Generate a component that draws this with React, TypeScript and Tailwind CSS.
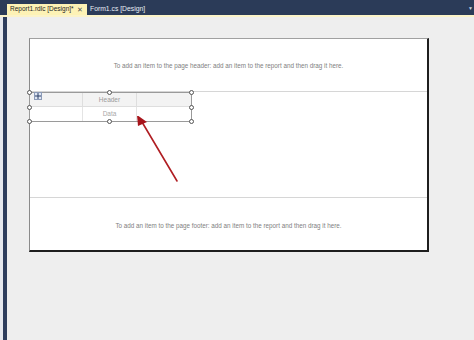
import React from 'react';

const Handle: React.FC<{ className: string }> = ({ className }) => (
  <span
    className={`absolute w-[5px] h-[5px] rounded-full border border-[#555] bg-white ${className}`}
  />
);

const App: React.FC = () => {
  return (
    <div className="w-[474px] h-[340px] flex flex-col bg-[#eeeeee] overflow-hidden font-['Liberation_Sans',sans-serif]">
      {/* Document tab strip */}
      <div className="h-[15px] flex items-end bg-[#2b3b58] shrink-0">
        <div className="w-[7px]" />
        <div className="h-[11px] w-[80px] flex items-center justify-between px-[3px] bg-[#fdf2b5] text-[#1e1e1e] text-[6.5px] leading-none">
          <span>Report1.rdlc [Design]*</span>
          <span className="text-[#555] text-[7px] pr-[1px]">✕</span>
        </div>
        <div className="h-[11px] flex items-center px-[3px] text-[#e8ecf4] text-[6.8px] leading-none">
          Form1.cs [Design]
        </div>
        <div className="flex-1" />
        <span className="text-[#c9d1e0] text-[5px] mr-[1px] mb-[3px]">▼</span>
      </div>
      <div className="h-[2px] bg-[#fbf3c9] shrink-0" />

      {/* Body */}
      <div className="flex-1 flex">
        <div className="w-[3px] bg-[#e6e8ee]" />
        <div className="w-[4px] bg-[#2e3d5c]" />
        <div className="flex-1 pl-[22px] pt-[21px] bg-[#eeeeee]">
          {/* Report page */}
          <div className="w-[400px] h-[214px] flex flex-col bg-white border-t border-l border-t-[#a0a0a0] border-l-[#8a8a8a] border-r-2 border-b-2 border-r-[#1e1e1e] border-b-[#1e1e1e]">
            <div className="h-[53px] flex items-center justify-center border-b border-[#d6d6d6] text-[#808080] text-[6.3px] pt-[1px]">
              To add an item to the page header: add an item to the report and then drag it here.
            </div>
            <div className="relative h-[106px] border-b border-[#d6d6d6]">
              {/* Tablix */}
              <div className="absolute left-[-1px] top-0 w-[163px] h-[30px] border border-[#9a9a9a]">
                <div className="grid grid-cols-[53px_54px_1fr] h-[14px] bg-[#f3f3f3] border-b border-[#dedede]">
                  <div className="border-r border-[#dedede]" />
                  <div className="border-r border-[#dedede] flex items-center justify-center text-[#9a9a9a] text-[6.5px]">
                    Header
                  </div>
                  <div />
                </div>
                <div className="grid grid-cols-[53px_54px_1fr] h-[14px]">
                  <div className="border-r border-[#e4e4e4]" />
                  <div className="border-r border-[#e4e4e4] flex items-center justify-center text-[#a8a8a8] text-[6.5px]">
                    Data
                  </div>
                  <div />
                </div>
                {/* move handle */}
                <span className="absolute left-[4px] top-[-1px] w-[8px] h-[8px] flex items-center justify-center bg-[#dfe6f3] border border-[#8c9bb8]">
                  <svg width="6" height="6" viewBox="0 0 6 6">
                    <path d="M3 0v6M0 3h6" stroke="#2a3f66" strokeWidth="1" />
                  </svg>
                </span>
                <Handle className="left-[-3px] top-[-3px]" />
                <Handle className="left-[77px] top-[-3px]" />
                <Handle className="right-[-3px] top-[-3px]" />
                <Handle className="left-[-3px] top-[12px]" />
                <Handle className="right-[-3px] top-[12px]" />
                <Handle className="left-[-3px] bottom-[-3px]" />
                <Handle className="left-[77px] bottom-[-3px]" />
                <Handle className="right-[-3px] bottom-[-3px]" />
              </div>
              {/* Red arrow */}
              <svg
                className="absolute left-[104px] top-[24px]"
                width="46"
                height="70"
                viewBox="0 0 46 70"
              >
                <line x1="43" y1="65" x2="8" y2="6" stroke="#b01e23" strokeWidth="1.6" strokeLinecap="round" />
                <polygon points="3,-1 13,6 4,10" fill="#a8141b" />
              </svg>
            </div>
            <div className="flex-1 flex items-center justify-center text-[#808080] text-[6.3px] pt-[3px]">
              To add an item to the page footer: add an item to the report and then drag it here.
            </div>
          </div>
        </div>
      </div>
    </div>
  );
};

export default App;
